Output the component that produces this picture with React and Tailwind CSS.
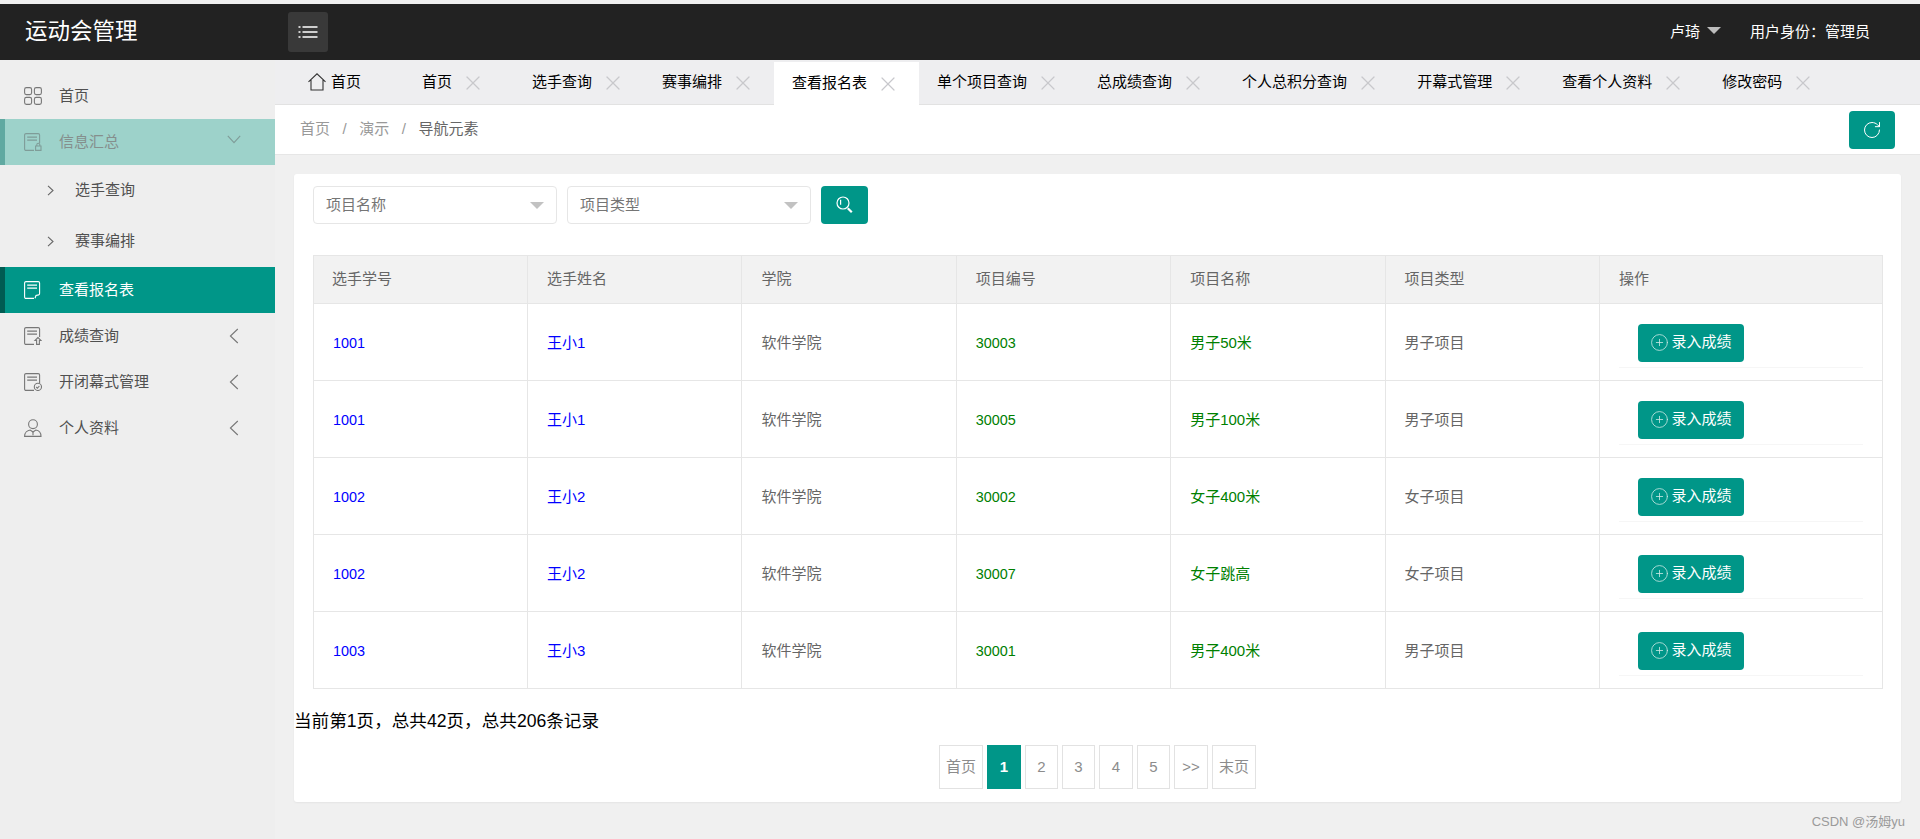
import React from "react";
import { RotateCw, CirclePlus, X } from "lucide-react";

const tabs = [
  { name: "首页", extra: true },
  { name: "选手查询" },
  { name: "赛事编排" },
  { name: "查看报名表", active: true },
  { name: "单个项目查询" },
  { name: "总成绩查询" },
  { name: "个人总积分查询" },
  { name: "开幕式管理" },
  { name: "查看个人资料" },
  { name: "修改密码" },
];

const rows = [
  ["1001", "王小1", "软件学院", "30003", "男子50米", "男子项目"],
  ["1001", "王小1", "软件学院", "30005", "男子100米", "男子项目"],
  ["1002", "王小2", "软件学院", "30002", "女子400米", "女子项目"],
  ["1002", "王小2", "软件学院", "30007", "女子跳高", "女子项目"],
  ["1003", "王小3", "软件学院", "30001", "男子400米", "男子项目"],
];

const heads = ["选手学号", "选手姓名", "学院", "项目编号", "项目名称", "项目类型", "操作"];

// sidebar icons, all on an 18 box
const GridIcon = () => (
  <svg width="18" height="18" viewBox="0 0 18 18" fill="none" stroke="#777" strokeWidth="1.1">
    <rect x="0.6" y="0.6" width="7" height="7" rx="1.8" />
    <rect x="10.4" y="0.6" width="7" height="7" rx="1.8" />
    <rect x="0.6" y="10.4" width="7" height="7" rx="1.8" />
    <rect x="10.4" y="10.4" width="7" height="7" rx="1.8" />
  </svg>
);

const DocIcon = ({ color = "#777", badge }) => (
  <svg width="18" height="18" viewBox="0 0 18 18" fill="none" stroke={color} strokeWidth="1.1">
    <path d="M10 17.4H2a1.4 1.4 0 0 1-1.4-1.4V2A1.4 1.4 0 0 1 2 .6h12.2A1.4 1.4 0 0 1 15.6 2v8" />
    <path d="M3.2 4.2h9.8M3.2 7.2h9.8" strokeWidth="1.3" />
    {badge === "lock" && <path d="M11.6 13h5.4v4.4h-5.4zM12.8 13v-1.2a1.5 1.5 0 0 1 3 0V13" />}
    {badge === "up" && <path d="M14 10.5l-3 3h1.6v3.9h2.8v-3.9H17z" />}
    {badge === "check" && (
      <>
        <circle cx="13.9" cy="13.9" r="3.6" />
        <path d="M12.2 14l1.2 1.2 2-2.2" />
      </>
    )}
    {badge === "fold" && <path d="M15.6 10v2.6a1.4 1.4 0 0 1-1 1.3l-2.6.6-1 2.8" />}
  </svg>
);

const UserIcon = () => (
  <svg width="18" height="18" viewBox="0 0 18 18" fill="none" stroke="#777" strokeWidth="1.1">
    <circle cx="9" cy="5.2" r="4.4" />
    <path d="M0.6 17.4c0-3.6 2.8-6 5.6-6.4l2.8 2 2.8-2c2.8.4 5.2 2.8 5.2 6.4z" />
    <path d="M9 13v3.2" />
  </svg>
);

const ChevLeft = () => (
  <svg width="10" height="16" viewBox="0 0 10 16" fill="none" stroke="#777" strokeWidth="1.1">
    <path d="M8.8 1L1.4 8l7.4 7" />
  </svg>
);

const ChevRight = () => (
  <svg width="7" height="11" viewBox="0 0 7 11" fill="none" stroke="#666" strokeWidth="1.1">
    <path d="M1 0.8l5 4.7-5 4.7" />
  </svg>
);

const Caret = ({ cls }) => <span className={`w-0 h-0 border-x-[7px] border-x-transparent border-t-[7px] ${cls}`} />;

const Item = ({ icon, label, arrow }) => (
  <div className="flex items-center h-[46px] pl-[24px] pr-[36px] text-[#505050]">
    {icon}
    <span className="ml-[17px] flex-1">{label}</span>
    {arrow}
  </div>
);

function Sidebar() {
  return (
    <aside className="w-[275px] shrink-0 bg-[#eeeeee] text-[15px] pt-[13px]">
      <Item icon={<GridIcon />} label="首页" />
      <div className="flex items-center h-[46px] bg-[#9dd2ca] border-l-[5px] border-[#60a9a1] pl-[19px] pr-[34px] text-[#858f8d]">
        <DocIcon color="#7f9c98" badge="lock" />
        <span className="ml-[17px] flex-1">信息汇总</span>
        <svg width="14" height="9" viewBox="0 0 14 9" fill="none" stroke="#7f9c98" strokeWidth="1.1" className="-mt-[6px]">
          <path d="M0.8 0.8L7 7.6l6.2-6.8" />
        </svg>
      </div>
      <div className="flex items-center h-[51px] pl-[47px] text-[#505050]">
        <ChevRight />
        <span className="ml-[21px]">选手查询</span>
      </div>
      <div className="flex items-center h-[51px] pl-[47px] text-[#505050]">
        <ChevRight />
        <span className="ml-[21px]">赛事编排</span>
      </div>
      <div className="flex items-center h-[46px] bg-[#009688] border-l-[5px] border-[#005c52] pl-[19px] text-white">
        <DocIcon color="#ffffff" badge="fold" />
        <span className="ml-[17px]">查看报名表</span>
      </div>
      <Item icon={<DocIcon badge="up" />} label="成绩查询" arrow={<ChevLeft />} />
      <Item icon={<DocIcon badge="check" />} label="开闭幕式管理" arrow={<ChevLeft />} />
      <Item icon={<UserIcon />} label="个人资料" arrow={<ChevLeft />} />
    </aside>
  );
}

function Tabs() {
  return (
    <div className="flex items-end h-[45px] bg-[#eeeef0] border-b border-[#e2e2e2] text-[15px] text-black">
      <div className="flex items-center h-[44px] pl-[33px] pr-[43px]">
        <svg width="18" height="18" viewBox="0 0 18 18" fill="none" stroke="#333" strokeWidth="1.1">
          <path d="M0.5 8.8L9 0.8l8.5 8M3 7v10h12V7" />
        </svg>
        <span className="ml-[5px]">首页</span>
      </div>
      {tabs.map((t) => (
        <div
          key={t.name}
          className={`flex items-center h-[43px] pl-[18px] ${t.extra ? "pr-[29px]" : "pr-[19px]"} ${t.active ? "bg-white -mb-px" : ""}`}
        >
          <span>{t.name}</span>
          <X className="ml-[9px] w-[24px] h-[24px] text-[#c8c8cc]" strokeWidth={1.2} />
        </div>
      ))}
    </div>
  );
}

function Breadcrumb() {
  return (
    <div className="flex items-center justify-between h-[50px] bg-white border-b border-[#e6e6e6] px-[25px] text-[15px]">
      <div className="flex items-center text-[#999]">
        <span>首页</span>
        <span className="mx-[12.5px]">/</span>
        <span>演示</span>
        <span className="mx-[12.5px]">/</span>
        <span className="text-[#666]">导航元素</span>
      </div>
      <button className="flex items-center justify-center w-[46px] h-[38px] rounded-sm bg-[#009688] text-white">
        <RotateCw className="w-[20px] h-[20px]" strokeWidth={1.2} />
      </button>
    </div>
  );
}

function Select({ label }) {
  return (
    <div className="flex items-center justify-between w-[244px] h-[38px] bg-white border border-[#e6e6e6] rounded-sm pl-[12px] pr-[12px] text-[15px] text-[#757575]">
      <span>{label}</span>
      <Caret cls="border-t-[#c2c2c2]" />
    </div>
  );
}

function DataTable() {
  return (
    <table className="w-[1570px] table-fixed border-collapse border border-[#e6e6e6] text-[15px] text-[#666]">
      <colgroup>
        <col className="w-[214px]" />
        {[1, 2, 3, 4, 5].map((i) => (
          <col key={i} className="w-[214.4px]" />
        ))}
        <col />
      </colgroup>
      <thead>
        <tr className="h-[48px] bg-[#f2f2f2]">
          {heads.map((h, i) => (
            <th key={h} className={`border border-[#e6e6e6] text-left font-normal ${i === 0 ? "pl-[18px]" : "pl-[19px]"}`}>
              {h}
            </th>
          ))}
        </tr>
      </thead>
      <tbody>
        {rows.map((r, i) => (
          <tr key={i} className="h-[77px]">
            <td className="border border-[#e6e6e6] pl-[19px] pt-[3px] text-[14.4px] text-[#0000ff]">{r[0]}</td>
            <td className="border border-[#e6e6e6] pl-[19px] pt-[2px] text-[#0000ff]">{r[1]}</td>
            <td className="border border-[#e6e6e6] pl-[19px] pt-[2px]">{r[2]}</td>
            <td className="border border-[#e6e6e6] pl-[19px] pt-[3px] text-[14.4px] text-[#008000]">{r[3]}</td>
            <td className="border border-[#e6e6e6] pl-[19px] pt-[2px] text-[#008000]">{r[4]}</td>
            <td className="border border-[#e6e6e6] pl-[19px] pt-[2px]">{r[5]}</td>
            <td className="border border-[#e6e6e6] px-[19px]">
              <div className="mt-[7px] h-[44px] border-b border-[#f6f6f6] pl-[19px]">
                <button className="flex items-center justify-center w-[106px] h-[38px] rounded-sm bg-[#009688] text-white">
                  <CirclePlus className="w-[19px] h-[19px] mr-[2px] text-[#cdeae6]" strokeWidth={1} />
                  录入成绩
                </button>
              </div>
            </td>
          </tr>
        ))}
      </tbody>
    </table>
  );
}

function Pager() {
  const cells = [
    ["首页", "w-[44px]"],
    ["1", "w-[34px]", true],
    ["2", "w-[33px]"],
    ["3", "w-[33px]"],
    ["4", "w-[34px]"],
    ["5", "w-[33px]"],
    [">>", "w-[34px]"],
    ["末页", "w-[44px]"],
  ];
  return (
    <div className="flex justify-center gap-[4px] mt-[12px]">
      {cells.map(([t, w, on]) => (
        <div
          key={t}
          className={`flex items-center justify-center h-[44px] ${w} border text-[15px] ${
            on ? "bg-[#009688] border-[#009688] text-white font-bold" : "bg-white border-[#e2e2e2] text-[#8c8c8c]"
          }`}
        >
          {t}
        </div>
      ))}
    </div>
  );
}

export default function App() {
  return (
    <div className="relative w-[1920px] h-[839px] overflow-hidden bg-[#f0f0f0] pt-[4px] font-['Liberation_Sans','Noto_Sans_CJK_SC',sans-serif]">
      <header className="flex items-center h-[56px] bg-[#222222] text-white">
        <div className="w-[288px] pl-[25px] text-[22.5px]">运动会管理</div>
        <button className="flex items-center justify-center w-[40px] h-[40px] rounded-[3px] bg-[#393939]">
          <svg width="20" height="12" viewBox="0 0 20 12" stroke="#fff" strokeWidth="1.4">
            <path d="M0.5 1h2M0.5 6h2M0.5 11h2M4.5 1h15M4.5 6h15M4.5 11h15" />
          </svg>
        </button>
        <div className="ml-auto flex items-center pr-[50px] text-[15px]">
          <span>卢琦</span>
          <Caret cls="ml-[7px] -mt-[4px] border-t-[#bdbdbd]" />
          <span className="ml-[29px]">用户身份：管理员</span>
        </div>
      </header>
      <div className="flex h-[779px]">
        <Sidebar />
        <main className="flex-1 min-w-0 bg-[#f0f0f0]">
          <Tabs />
          <Breadcrumb />
          <section className="mt-[19px] ml-[19px] w-[1607px] h-[628px] bg-white rounded-[3px] shadow-[0_1px_2px_rgba(0,0,0,0.05)] pt-[12px]">
            <div className="flex gap-[10px] px-[19px]">
              <Select label="项目名称" />
              <Select label="项目类型" />
              <button className="flex items-center justify-center w-[47px] h-[38px] rounded-sm bg-[#009688]">
                <svg width="18" height="18" viewBox="0 0 18 18" fill="none" stroke="#fff" strokeWidth="1.2">
                  <circle cx="7" cy="7" r="6" />
                  <path d="M4.6 3.8v5" />
                  <path d="M11.8 12.2l4 4" strokeWidth="2.2" />
                </svg>
              </button>
            </div>
            <div className="mt-[31px] px-[19px]">
              <DataTable />
            </div>
            <div className="mt-[20px] h-[24px] leading-[24px] text-[17.6px] text-black">当前第1页，总共42页，总共206条记录</div>
            <Pager />
          </section>
        </main>
      </div>
      <span className="absolute right-[15px] bottom-[8px] text-[13px] text-[#9a9a9a]">CSDN @汤姆yu</span>
    </div>
  );
}
